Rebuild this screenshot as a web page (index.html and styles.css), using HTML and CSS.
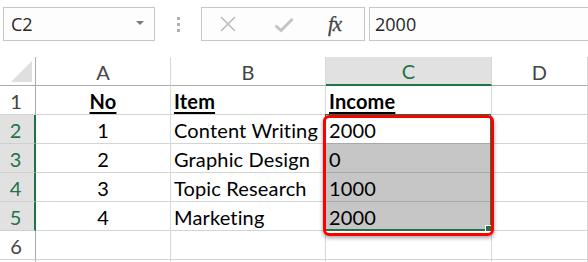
FILE: index.html
```html
<!DOCTYPE html>
<html>
<head>
<meta charset="utf-8">
<link rel="stylesheet" href="styles.css">
</head>
<body>
<div class="toolbar">
  <div class="namebox"><span class="name">C2</span><span class="caret"></span></div>
  <div class="dots"><i></i><i></i><i></i></div>
  <div class="fbuttons">
    <svg class="ico-x" width="16" height="16" viewBox="0 0 16 16"><path d="M1 1L15 15M15 1L1 15" stroke="#bdbdbd" stroke-width="1.6" fill="none"/></svg>
    <svg class="ico-ok" width="20" height="16" viewBox="0 0 20 16"><path d="M1.5 8.5L7 13.5L18.5 2" stroke="#c4c4c4" stroke-width="3" fill="none"/></svg>
    <span class="fx">fx</span>
  </div>
  <div class="formula">2000</div>
</div>
<div class="sheet">
  <div class="grid">
    <div class="corner"><span class="tri"></span></div>
    <div class="ch">A</div><div class="ch">B</div><div class="ch sel">C</div><div class="ch">D</div>

    <div class="rh">1</div>
    <div class="c center"><b>No</b></div><div class="c"><b>Item</b></div><div class="c cc"><b>Income</b></div><div class="c"></div>

    <div class="rh sel">2</div>
    <div class="c center">1</div><div class="c">Content Writing</div><div class="c cc active">2000</div><div class="c"></div>

    <div class="rh sel">3</div>
    <div class="c center">2</div><div class="c">Graphic Design</div><div class="c cc hl">0</div><div class="c"></div>

    <div class="rh sel">4</div>
    <div class="c center">3</div><div class="c">Topic Research</div><div class="c cc hl">1000</div><div class="c"></div>

    <div class="rh sel">5</div>
    <div class="c center">4</div><div class="c">Marketing</div><div class="c cc hl last">2000</div><div class="c"></div>

    <div class="rh">6</div>
    <div class="c"></div><div class="c"></div><div class="c cc"></div><div class="c"></div>

    <div class="rh"></div>
    <div class="c"></div><div class="c"></div><div class="c"></div><div class="c"></div>
  </div>
  <div class="selbox"><span class="handle"></span></div>
  <div class="redbox"></div>
</div>
</body>
</html>
```

FILE: styles.css
```css
html, body {
  margin: 0;
  padding: 0;
  background: #ffffff;
  width: 588px;
  height: 262px;
  overflow: hidden;
}

.toolbar {
  display: flex;
  align-items: stretch;
  height: 34px;
  margin-top: 7px;
  padding-left: 3px;
  font-family: "Open Sans", "Noto Sans", sans-serif;
}

.namebox {
  box-sizing: border-box;
  width: 152px;
  border: 1px solid #c6c6c6;
  background: #fdfdfd;
  display: flex;
  align-items: center;
  justify-content: space-between;
  padding: 0 10px 0 7px;
}

.name {
  font-size: 18px;
  color: #262626;
}

.caret {
  width: 0;
  height: 0;
  border-left: 4px solid transparent;
  border-right: 4px solid transparent;
  border-top: 4px solid #7a7a7a;
  margin-top: -2px;
}

.dots {
  width: 46px;
  display: flex;
  flex-direction: column;
  align-items: center;
  justify-content: center;
  gap: 3px;
}

.dots i {
  display: block;
  width: 3px;
  height: 3px;
  background: #b0b0b0;
}

.fbuttons {
  box-sizing: border-box;
  width: 164px;
  border: 1px solid #c6c6c6;
  background: #fdfdfd;
  display: flex;
  align-items: center;
  padding-left: 18px;
}

.ico-x { margin-right: 38px; }
.ico-ok { margin-right: 34px; margin-top: 2px; }

.fx {
  font-family: "Liberation Serif", "DejaVu Serif", serif;
  font-style: italic;
  font-size: 21px;
  color: #444;
  letter-spacing: -1px;
  -webkit-text-stroke: 0.3px #444;
}

.formula {
  flex: 1;
  margin-left: 4px;
  border-top: 1px solid #c6c6c6;
  border-bottom: 1px solid #c6c6c6;
  border-left: 1px solid #c6c6c6;
  background: #fdfdfd;
  font-size: 18px;
  color: #262626;
  display: flex;
  align-items: center;
  padding-left: 5px;
}

.sheet {
  position: relative;
  margin-top: 16px;
}

.grid {
  display: grid;
  grid-template-columns: 36px 135px 155px 166px 96px;
  grid-template-rows: repeat(7, 29px) 3px;
  font-family: "Lato", "Liberation Sans", sans-serif;
  font-size: 20px;
  letter-spacing: 0.15px;
  color: #000;
}

.grid > div {
  box-sizing: border-box;
  border-right: 1px solid #d9d9d9;
  border-bottom: 1px solid #d4d4d4;
  overflow: hidden;
  white-space: nowrap;
}

.corner {
  position: relative;
  border-bottom-color: #ababab !important;
  border-right-color: #ababab !important;
}

.tri {
  position: absolute;
  right: 3px;
  bottom: 3px;
  width: 0;
  height: 0;
  border-left: 21px solid transparent;
  border-bottom: 21px solid #dfdfdf;
}

.ch {
  border-bottom-color: #ababab !important;
  color: #444;
  text-align: center;
  line-height: 30px;
}

.ch.sel {
  background: #e1e1e1;
  color: #217346;
  border-bottom: 2px solid #217346 !important;
  line-height: 29px;
}

.rh {
  color: #444;
  text-align: center;
  line-height: 30px;
  border-right-color: #ababab !important;
  padding-right: 3px;
}

.rh.sel {
  background: #e1e1e1;
  color: #217346;
  border-right: 2px solid #217346 !important;
  border-bottom-color: #cfcfcf !important;
}

.c {
  line-height: 31px;
  padding-left: 3px;
}

.c b {
  text-decoration: underline;
  text-decoration-thickness: 1.5px;
  text-underline-offset: 3px;
}

.center {
  text-align: center;
  padding-left: 0;
}

.hl {
  background: #c6c6c6;
  border-bottom-color: #a9a9a9 !important;
}

.active {
  border-bottom-color: #a9a9a9 !important;
}

.selbox {
  position: absolute;
  left: 325px;
  top: 57px;
  width: 166px;
  height: 117px;
  box-sizing: border-box;
  border: 1px solid #217346;
  border-bottom-width: 2px;
}

.handle {
  position: absolute;
  right: -2px;
  bottom: -3px;
  width: 5px;
  height: 5px;
  background: #217346;
  border: 1px solid #fff;
}

.redbox {
  position: absolute;
  left: 323px;
  top: 58px;
  width: 171px;
  height: 121px;
  box-sizing: border-box;
  border: 3px solid #ff0000;
  border-radius: 6px;
  box-shadow: 0 2px 4px rgba(0, 0, 0, 0.35);
}
```
